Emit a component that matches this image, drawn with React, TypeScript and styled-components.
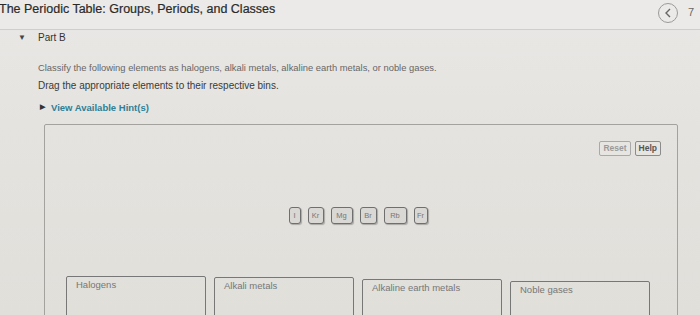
import React from 'react';
import styled, { createGlobalStyle } from 'styled-components';

const Global = createGlobalStyle`
  html, body {
    margin: 0;
    padding: 0;
    background: #e3e2de;
    font-family: "Liberation Sans", Arial, sans-serif;
    overflow: hidden;
  }
`;

const Page = styled.div`
  width: 700px;
  height: 315px;
  overflow: hidden;
  background: linear-gradient(180deg, #e9e8e6 0%, #e4e3df 40%, #e0dfda 100%);
`;

const Header = styled.div`
  height: 30px;
  display: flex;
  align-items: flex-start;
  padding-top: 2px;
  border-bottom: 1px solid #cfcecb;
  box-sizing: border-box;
  background: #ebeae8;
`;

const Title = styled.h1`
  margin: 0 0 0 -1px;
  font-size: 12.5px;
  line-height: 15px;
  font-weight: normal;
  color: #2a2a2a;
  flex: 1;
  -webkit-text-stroke: 0.2px #2a2a2a;
`;

const NavCircle = styled.div`
  width: 20px;
  height: 20px;
  border-radius: 50%;
  border: 1px solid #9a9a9a;
  box-sizing: border-box;
  display: flex;
  align-items: center;
  justify-content: center;
  margin-top: 1px;
  margin-right: 1px;
  color: #666;
`;

const PageNum = styled.span`
  font-size: 11px;
  color: #666;
  margin: 4px 0 0 9px;
  width: 12px;
`;

const PartRow = styled.div`
  display: flex;
  align-items: center;
  height: 14px;
  padding-left: 18px;
  font-size: 10px;
  color: #333;
`;

const Caret = styled.span`
  font-size: 8px;
  color: #444;
  width: 20px;
`;

const Content = styled.div`
  padding: 15px 0 0 38px;
`;

const Instruction = styled.p<{ $strong?: boolean }>`
  margin: 0;
  font-size: ${(p) => (p.$strong ? '10px' : '9.4px')};
  line-height: 18px;
  color: ${(p) => (p.$strong ? '#3a3a3a' : '#666')};
`;

const HintLink = styled.div`
  display: flex;
  align-items: center;
  gap: 6px;
  height: 12px;
  margin-top: 6px;
  font-size: 9.5px;
  font-weight: bold;
  color: #2f7f95;
`;

const HintCaret = styled.span`
  font-size: 7px;
  color: #333;
  margin-left: 2px;
`;

const Board = styled.div`
  margin: 11px 22px 0 44px;
  height: 220px;
  border: 1px solid #a3a29e;
  border-radius: 2px;
  box-sizing: border-box;
  padding: 16px 16px 0 0;
  display: flex;
  flex-direction: column;
`;

const Toolbar = styled.div`
  display: flex;
  justify-content: flex-end;
  gap: 4px;
`;

const ToolButton = styled.button<{ $muted?: boolean }>`
  height: 15px;
  padding: 0 3px;
  font-family: inherit;
  font-size: 8.5px;
  font-weight: bold;
  color: ${(p) => (p.$muted ? '#9a9a9a' : '#555')};
  background: #e6e5e2;
  border: 1px solid ${(p) => (p.$muted ? '#a9a9a9' : '#8c8c8c')};
  border-radius: 2px;
  line-height: 13px;
`;

const Tiles = styled.div`
  display: flex;
  justify-content: center;
  gap: 7px;
  margin-top: 51px;
  padding-left: 10px;
`;

const Tile = styled.div<{ $w: number }>`
  width: ${(p) => p.$w}px;
  height: 17px;
  box-sizing: border-box;
  border: 1px solid #6f6f6f;
  border-radius: 3px;
  background: #d9d8d4;
  box-shadow: 1px 1px 1px rgba(0, 0, 0, 0.25);
  display: flex;
  align-items: center;
  justify-content: center;
  font-size: 7.5px;
  color: #777;
`;

const Bins = styled.div`
  display: flex;
  justify-content: center;
  gap: 8px;
  margin-top: 52px;
  padding-left: 10px;
`;

const Bin = styled.div<{ $drop: number }>`
  width: 140px;
  height: 80px;
  margin-top: ${(p) => p.$drop}px;
  box-sizing: border-box;
  border: 1px solid #777;
  border-radius: 2px;
  padding: 2px 9px;
  font-size: 9.5px;
  color: #777;
`;

const elements = [
  { sym: 'I', w: 12 },
  { sym: 'Kr', w: 16 },
  { sym: 'Mg', w: 22 },
  { sym: 'Br', w: 17 },
  { sym: 'Rb', w: 23 },
  { sym: 'Fr', w: 14 },
];

const bins = [
  { label: 'Halogens', drop: 0 },
  { label: 'Alkali metals', drop: 1 },
  { label: 'Alkaline earth metals', drop: 3 },
  { label: 'Noble gases', drop: 5 },
];

export default function App() {
  return (
    <Page>
      <Global />
      <Header>
        <Title>The Periodic Table: Groups, Periods, and Classes</Title>
        <NavCircle>
          <svg width="8" height="10" viewBox="0 0 8 10">
            <path d="M6 1 L2 5 L6 9" fill="none" stroke="#666" strokeWidth="1.4" />
          </svg>
        </NavCircle>
        <PageNum>7</PageNum>
      </Header>
      <PartRow>
        <Caret>▼</Caret>
        Part B
      </PartRow>
      <Content>
        <Instruction>
          Classify the following elements as halogens, alkali metals, alkaline earth metals, or noble gases.
        </Instruction>
        <Instruction $strong>Drag the appropriate elements to their respective bins.</Instruction>
        <HintLink>
          <HintCaret>▶</HintCaret>
          View Available Hint(s)
        </HintLink>
      </Content>
      <Board>
        <Toolbar>
          <ToolButton $muted>Reset</ToolButton>
          <ToolButton>Help</ToolButton>
        </Toolbar>
        <Tiles>
          {elements.map((e) => (
            <Tile key={e.sym} $w={e.w}>
              {e.sym}
            </Tile>
          ))}
        </Tiles>
        <Bins>
          {bins.map((b) => (
            <Bin key={b.label} $drop={b.drop}>
              {b.label}
            </Bin>
          ))}
        </Bins>
      </Board>
    </Page>
  );
}
